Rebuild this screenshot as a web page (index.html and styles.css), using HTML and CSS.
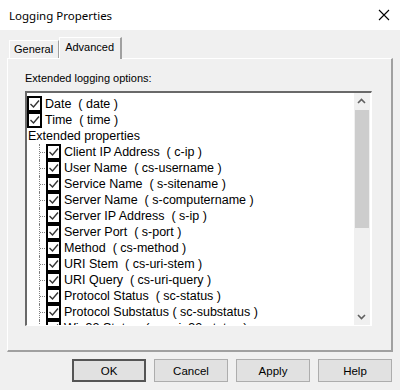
FILE: index.html
```html
<!DOCTYPE html>
<html lang="en">
<head>
    <meta charset="UTF-8">
    <title>Logging Properties</title>
    <link rel="stylesheet" href="styles.css">
</head>
<body>

<div class="dialog">

    <div class="titlebar">
        <span class="title">Logging Properties</span>
        <svg class="close" width="12" height="12" viewBox="0 0 12 12">
            <path d="M1 1 L11 11 M11 1 L1 11" stroke="#000" stroke-width="1.1" fill="none"/>
        </svg>
    </div>

    <div class="tabs">
        <div class="tab">General</div>
        <div class="tab active">Advanced</div>
    </div>

    <div class="panel">
        <div class="label">Extended logging options:</div>

        <div class="listbox">
            <ul class="items">
                <li><span class="check"></span>Date  ( date )</li>
                <li><span class="check"></span>Time  ( time )</li>
                <li class="group">Extended properties</li>
                <li class="child"><span class="check"></span>Client IP Address  ( c-ip )</li>
                <li class="child"><span class="check"></span>User Name  ( cs-username )</li>
                <li class="child"><span class="check"></span>Service Name  ( s-sitename )</li>
                <li class="child"><span class="check"></span>Server Name  ( s-computername )</li>
                <li class="child"><span class="check"></span>Server IP Address  ( s-ip )</li>
                <li class="child"><span class="check"></span>Server Port  ( s-port )</li>
                <li class="child"><span class="check"></span>Method  ( cs-method )</li>
                <li class="child"><span class="check"></span>URI Stem  ( cs-uri-stem )</li>
                <li class="child"><span class="check"></span>URI Query  ( cs-uri-query )</li>
                <li class="child"><span class="check"></span>Protocol Status  ( sc-status )</li>
                <li class="child"><span class="check"></span>Protocol Substatus ( sc-substatus )</li>
                <li class="child"><span class="check"></span>Win32 Status  ( sc-win32-status )</li>
            </ul>
            <div class="scrollbar">
                <svg class="arrow" width="15" height="17" viewBox="0 0 15 17">
                    <path d="M4 10 L7.5 6.5 L11 10" stroke="#606060" stroke-width="1.6" fill="none"/>
                </svg>
                <div class="track">
                    <div class="thumb"></div>
                </div>
                <svg class="arrow" width="15" height="17" viewBox="0 0 15 17">
                    <path d="M4 7 L7.5 10.5 L11 7" stroke="#606060" stroke-width="1.6" fill="none"/>
                </svg>
            </div>
        </div>
    </div>

    <div class="buttons">
        <button class="btn default">OK</button>
        <button class="btn">Cancel</button>
        <button class="btn">Apply</button>
        <button class="btn">Help</button>
    </div>

</div>

</body>
</html>
```

FILE: styles.css
```css
html, body {
    margin: 0;
    padding: 0;
}
body {
    width: 400px;
    height: 390px;
    background-color: #f0f0f0;
    font-family: "Liberation Sans", Arial, sans-serif;
    font-size: 11px;
    color: #000;
    overflow: hidden;
}
ul, li {
    list-style: none;
    padding: 0;
    margin: 0;
}

.titlebar {
    height: 30px;
    background-color: #fff;
    display: flex;
    align-items: center;
    justify-content: space-between;
    padding: 0 10px 0 9px;
}
.title {
    font-family: "Noto Sans", "Open Sans", sans-serif;
    font-size: 11.5px;
}
.close {
    display: block;
}

.tabs {
    display: flex;
    align-items: flex-end;
    height: 28px;
    padding-left: 9px;
}
.tab {
    height: 17px;
    line-height: 17px;
    padding: 0 5px 0 4px;
    border: 1px solid #fff;
    border-bottom: none;
    border-right-color: #a0a0a0;
}
.tab.active {
    height: 21px;
    line-height: 19px;
    padding: 0 6px 0 5px;
    border-right: 2px solid #a0a0a0;
    position: relative;
    top: 1px;
    background-color: #f0f0f0;
}

.panel {
    margin: 0 7px 0 7px;
    height: 294px;
    border: 1px solid #fff;
    border-right: 2px solid #a0a0a0;
    border-bottom: 2px solid #a0a0a0;
    padding: 11px 19px 0 17px;
    box-sizing: border-box;
}
.label {
    height: 16px;
    line-height: 16px;
    margin-bottom: 5px;
}

.listbox {
    display: flex;
    height: 235px;
    border-top: 2px solid #696969;
    border-left: 2px solid #696969;
    border-right: 1px solid #fff;
    border-bottom: 1px solid #fff;
    background-color: #fff;
    box-sizing: border-box;
}
.items {
    flex: 1;
    overflow: hidden;
    padding-top: 3px;
    position: relative;
    font-size: 12.5px;
}
.items li {
    height: 16px;
    line-height: 16px;
    white-space: pre;
    display: flex;
    align-items: center;
}
.items .group {
    padding-left: 1px;
}
.items .child {
    padding-left: 19px;
    position: relative;
}
.items .child::before {
    content: "";
    position: absolute;
    left: 12px;
    top: 0;
    bottom: 0;
    border-left: 1px dotted #808080;
}
.items .child::after {
    content: "";
    position: absolute;
    left: 13px;
    top: 8px;
    width: 5px;
    border-top: 1px dotted #808080;
}
.check {
    width: 11px;
    height: 12px;
    border: 2px solid #000;
    margin-right: 3px;
    background-color: #fff;
    flex: none;
    background-image: url("data:image/svg+xml,%3Csvg xmlns='http://www.w3.org/2000/svg' width='11' height='12' viewBox='0 0 11 12'%3E%3Cpath d='M1.5 6 L4.5 9 L10 2.5' stroke='%23333' stroke-width='1.4' fill='none'/%3E%3C/svg%3E");
}

.scrollbar {
    width: 16px;
    display: flex;
    flex-direction: column;
    background-color: #f0f0f0;
    margin-right: 1px;
}
.arrow {
    display: block;
    flex: none;
}
.track {
    flex: 1;
    padding: 0 1px;
}
.thumb {
    height: 118px;
    background-color: #cdcdcd;
}

.buttons {
    display: flex;
    justify-content: flex-end;
    gap: 8px;
    padding: 7px 8px 0 0;
}
.btn {
    width: 74px;
    height: 23px;
    font-family: "Liberation Sans", Arial, sans-serif;
    font-size: 11.5px;
    color: #000;
    background-color: #e1e1e1;
    border: 1px solid #adadad;
    padding: 0;
}
.btn.default {
    border: 2px solid #555;
}
```
